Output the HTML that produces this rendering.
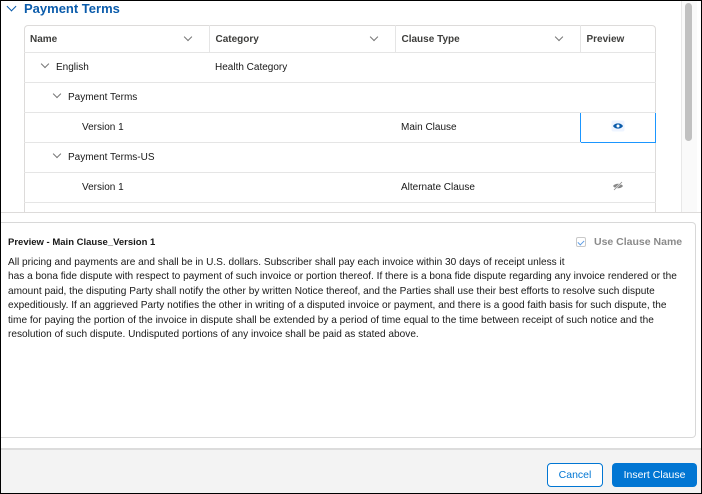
<!DOCTYPE html>
<html><head><style>
*{box-sizing:border-box;margin:0;padding:0}
body{width:702px;height:494px;overflow:hidden;background:#fff;font-family:"Liberation Sans",sans-serif;color:#181818;position:relative}
.frame{position:absolute;inset:0;border:1px solid #000;pointer-events:none;z-index:10}
.abs{position:absolute}
.hdr{left:8px;top:1px;font-size:13px;color:#0b5cab;font-weight:bold}
.clip{position:absolute;left:24px;top:25px;width:634px;height:187px;overflow:hidden}
table{width:632px;border-collapse:collapse;font-size:10px}
td,th{height:30px;border-bottom:1px solid #e5e5e5;text-align:left;padding-left:6px;font-weight:normal;white-space:nowrap}
th{height:27px;font-weight:bold;color:#3e3e3c;border-right:1px solid #e5e5e5;position:relative;padding-top:2px}
.tb{position:absolute;left:24px;top:25px;width:632px;height:188px;border:1px solid #dddbda;border-bottom:none;border-radius:4px 4px 0 0}
.chev{display:inline-block;width:6px;height:6px;border-right:1px solid #777;border-bottom:1px solid #777;transform:rotate(45deg);margin-right:8px;position:relative;top:-3px}
th .chev{position:absolute;right:10px;top:9px}
.btn{position:absolute;top:463px;height:24px;border-radius:4px;font-size:10.5px;display:flex;align-items:center;justify-content:center}
.p{position:absolute;left:8px;font-size:10.1px;white-space:nowrap;line-height:15px;color:#181818}
</style></head><body>
<div class="abs hdr"><span class="chev" style="border-color:#0b5cab;border-width:0 1.5px 1.5px 0;margin-right:9px;width:7px;height:7px"></span>Payment Terms</div>
<div class="tb"></div>
<div class="clip"><table>
<tr><th style="width:185px">Name<span class="chev"></span></th><th style="width:186px">Category<span class="chev"></span></th><th style="width:185px">Clause Type<span class="chev"></span></th><th style="border-right:none;padding-left:6px">Preview</th></tr>
<tr><td style="padding-left:18px"><span class="chev"></span>English</td><td>Health Category</td><td></td><td></td></tr>
<tr><td style="padding-left:30px"><span class="chev"></span>Payment Terms</td><td></td><td></td><td></td></tr>
<tr><td style="padding-left:58px">Version 1</td><td></td><td>Main Clause</td><td style="border:1px solid #1b96ff;text-align:center;padding:0"><svg width="14" height="12" viewBox="0 0 14 12"><rect x="0.5" y="0.5" width="13" height="11" rx="2" fill="#eef4ff"/><path d="M2 6C4 2.5 10 2.5 12 6C10 9.5 4 9.5 2 6Z" fill="#0b5cab"/><circle cx="7" cy="6" r="1.5" fill="#fff"/></svg></td></tr>
<tr><td style="padding-left:30px"><span class="chev"></span>Payment Terms-US</td><td></td><td></td><td></td></tr>
<tr><td style="padding-left:58px">Version 1</td><td></td><td>Alternate Clause</td><td style="text-align:center;padding:0"><svg width="12" height="10" viewBox="0 0 12 10"><path d="M1 5C3 2 9 2 11 5C9 8 3 8 1 5Z" fill="#888"/><path d="M2 9L10 1" stroke="#fff" stroke-width="1.6"/><path d="M2 9L10 1" stroke="#888" stroke-width="0.8"/></svg></td></tr>
<tr><td></td><td></td><td></td><td></td></tr>
</table></div>
<div class="abs" style="left:0;top:212px;width:702px;height:1px;background:#dddbda"></div>
<div class="abs" style="left:681px;top:1px;width:16px;height:211px;border-left:1px solid #e8e8e8;background:#fafafa"></div>
<div class="abs" style="left:685px;top:3px;width:7px;height:138px;border-radius:4px;background:#c1c1c1"></div>
<div class="abs" style="left:0;top:222px;width:696px;height:216px;border:1px solid #d8d8d8;border-left:none;border-radius:0 4px 4px 0"></div>
<div class="abs" style="left:8px;top:237px;font-size:9.5px;font-weight:bold">Preview - Main Clause_Version 1</div>
<div class="abs" style="left:576px;top:237px;width:10px;height:10px;border:1px solid #c9c9c9;border-radius:2px"></div>
<div class="abs" style="left:579px;top:239px;width:4px;height:6px;border-right:1px solid #5a9be6;border-bottom:1px solid #5a9be6;transform:rotate(45deg)"></div>
<div class="abs" style="left:594px;top:236px;font-size:10.5px;font-weight:bold;color:#8a8a8a">Use Clause Name</div>
<div class="p" style="top:255px">All pricing and payments are and shall be in U.S. dollars. Subscriber shall pay each invoice within 30 days of receipt unless it</div>
<div class="p" style="top:269px">has a bona fide dispute with respect to payment of such invoice or portion thereof. If there is a bona fide dispute regarding any invoice rendered or the</div>
<div class="p" style="top:284px">amount paid, the disputing Party shall notify the other by written Notice thereof, and the Parties shall use their best efforts to resolve such dispute</div>
<div class="p" style="top:298px">expeditiously. If an aggrieved Party notifies the other in writing of a disputed invoice or payment, and there is a good faith basis for such dispute, the</div>
<div class="p" style="top:313px">time for paying the portion of the invoice in dispute shall be extended by a period of time equal to the time between receipt of such notice and the</div>
<div class="p" style="top:327px">resolution of such dispute. Undisputed portions of any invoice shall be paid as stated above.</div>
<div class="abs" style="left:0;top:448px;width:702px;height:46px;background:#f3f3f3;border-top:2px solid #dcdcdc"></div>
<div class="btn" style="left:547px;width:56px;background:#fff;border:1px solid #0176d3;color:#0176d3">Cancel</div>
<div class="btn" style="left:612px;width:85px;background:#0176d3;color:#fff">Insert Clause</div>
<div class="frame"></div>
</body></html>
